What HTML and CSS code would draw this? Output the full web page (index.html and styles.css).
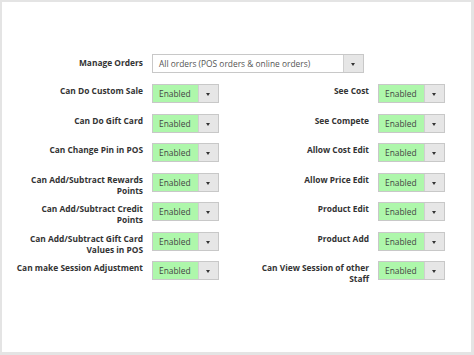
FILE: index.html
```html
<!DOCTYPE html>
<html lang="en">
<head>
    <meta charset="UTF-8">
    <meta name="viewport" content="width=device-width, initial-scale=1.0">
    <title>Staff Permissions</title>
    <link rel="stylesheet" href="styles.css">
</head>
<body>
    <div class="frame">
        <div class="manage-row">
            <label class="field-label">Manage Orders</label>
            <div class="select wide">
                <span class="value">All orders (POS orders &amp; online orders)</span>
                <span class="arrow"></span>
            </div>
        </div>

        <div class="perm-grid">
            <label class="field-label left">Can Do Custom Sale</label>
            <div class="select on"><span class="value">Enabled</span><span class="arrow"></span></div>
            <label class="field-label right">See Cost</label>
            <div class="select on"><span class="value">Enabled</span><span class="arrow"></span></div>

            <label class="field-label left">Can Do Gift Card</label>
            <div class="select on"><span class="value">Enabled</span><span class="arrow"></span></div>
            <label class="field-label right">See Compete</label>
            <div class="select on"><span class="value">Enabled</span><span class="arrow"></span></div>

            <label class="field-label left">Can Change Pin in POS</label>
            <div class="select on"><span class="value">Enabled</span><span class="arrow"></span></div>
            <label class="field-label right">Allow Cost Edit</label>
            <div class="select on"><span class="value">Enabled</span><span class="arrow"></span></div>

            <label class="field-label left">Can Add/Subtract Rewards Points</label>
            <div class="select on"><span class="value">Enabled</span><span class="arrow"></span></div>
            <label class="field-label right">Allow Price Edit</label>
            <div class="select on"><span class="value">Enabled</span><span class="arrow"></span></div>

            <label class="field-label left">Can Add/Subtract Credit Points</label>
            <div class="select on"><span class="value">Enabled</span><span class="arrow"></span></div>
            <label class="field-label right">Product Edit</label>
            <div class="select on"><span class="value">Enabled</span><span class="arrow"></span></div>

            <label class="field-label left">Can Add/Subtract Gift Card Values in POS</label>
            <div class="select on"><span class="value">Enabled</span><span class="arrow"></span></div>
            <label class="field-label right">Product Add</label>
            <div class="select on"><span class="value">Enabled</span><span class="arrow"></span></div>

            <label class="field-label left">Can make Session Adjustment</label>
            <div class="select on"><span class="value">Enabled</span><span class="arrow"></span></div>
            <label class="field-label right">Can View Session of other Staff</label>
            <div class="select on"><span class="value">Enabled</span><span class="arrow"></span></div>
        </div>
    </div>
</body>
</html>
```

FILE: styles.css
```css
html, body {
    margin: 0;
    padding: 0;
}
body {
    font-family: "Open Sans", Arial, sans-serif;
    background-color: #e4e4e4;
}
.frame {
    box-sizing: border-box;
    width: 469px;
    height: 350px;
    margin: 2px 0 0 2px;
    background-color: #fff;
    padding-top: 52px;
}
.manage-row {
    display: flex;
    align-items: flex-start;
    gap: 9px;
}
.manage-row .field-label {
    width: 141px;
    padding-top: 3px;
}
.field-label {
    display: block;
    font-size: 8.4px;
    line-height: 11px;
    font-weight: 700;
    color: #333;
    text-align: right;
    padding-top: 1px;
}
.field-label.left {
    padding-left: 12px;
}
.field-label.right {
    padding-left: 28px;
}
.perm-grid {
    display: grid;
    grid-template-columns: 141px 67px 141px 67px;
    grid-auto-rows: 19.5px;
    column-gap: 9px;
    row-gap: 10px;
    margin-top: 11px;
}
.select {
    box-sizing: border-box;
    display: flex;
    height: 19px;
    border: 1px solid #c8c8c8;
    background-color: #fff;
    font-size: 8.4px;
    color: #444;
}
.select.wide {
    width: 212px;
}
.select .value {
    flex: 1;
    padding-left: 6px;
    line-height: 17px;
    white-space: nowrap;
    overflow: hidden;
}
.select.wide .value {
    color: #555;
}
.select.on .value {
    background-color: #aef7ab;
}
.select .arrow {
    position: relative;
    width: 19px;
    border-left: 1px solid #cfcfcf;
    background-color: #e6e6e6;
}
.select .arrow::after {
    content: "";
    position: absolute;
    left: 7px;
    top: 8px;
    border-left: 2px solid transparent;
    border-right: 2px solid transparent;
    border-top: 3px solid #333;
}
```
